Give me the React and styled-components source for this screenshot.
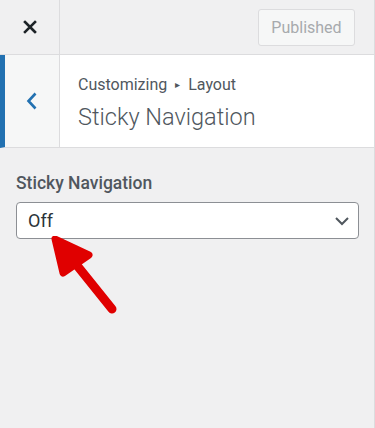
import React from "react";
import styled, { createGlobalStyle } from "styled-components";

const GlobalStyle = createGlobalStyle`
  html, body {
    margin: 0;
    padding: 0;
    background: #f0f0f1;
  }
  body {
    font-family: Roboto, "Open Sans", sans-serif;
    color: #50575e;
  }
`;

const App = () => {
  return (
    <Panel>
      <GlobalStyle />
      <Header>
        <CloseButton aria-label="Close">
          <svg width="14" height="14" viewBox="0 0 14 14">
            <path d="M2 2 L12 12 M12 2 L2 12" stroke="#1d2327" strokeWidth="2.6" strokeLinecap="square" />
          </svg>
        </CloseButton>
        <HeaderRight>
          <PublishButton disabled>Published</PublishButton>
        </HeaderRight>
      </Header>

      <SectionHead>
        <BackButton aria-label="Back">
          <svg width="12" height="18" viewBox="0 0 12 18">
            <path d="M9.5 1.5 L2.5 9 L9.5 16.5" fill="none" stroke="#2271b1" strokeWidth="2.6" />
          </svg>
        </BackButton>
        <TitleBlock>
          <Crumbs>
            Customizing <Caret>▸</Caret> Layout
          </Crumbs>
          <Title>Sticky Navigation</Title>
        </TitleBlock>
      </SectionHead>

      <Body>
        <Label>Sticky Navigation</Label>
        <SelectBox>
          <span>Off</span>
          <svg width="14" height="10" viewBox="0 0 14 10">
            <path d="M1 2 L7 8 L13 2" fill="none" stroke="#50575e" strokeWidth="2" />
          </svg>
        </SelectBox>
        <Arrow width="140" height="110" viewBox="0 0 140 110">
          <polygon points="39,3 73,19 47,37" fill="#e00000" stroke="#e00000" strokeWidth="7" strokeLinejoin="round" />
          <line x1="47" y1="12" x2="96" y2="73" stroke="#e00000" strokeWidth="9" strokeLinecap="round" />
        </Arrow>
      </Body>
    </Panel>
  );
};

export default App;

const Panel = styled.div`
  width: 374px;
  height: 428px;
  border-right: 1px solid #dcdcde;
  background: #f0f0f1;
  position: relative;
  overflow: hidden;
`;

const Header = styled.div`
  height: 54px;
  display: flex;
  border-bottom: 1px solid #dcdcde;
`;

const CloseButton = styled.div`
  width: 59px;
  display: flex;
  align-items: center;
  justify-content: center;
  border-right: 1px solid #dcdcde;
`;

const HeaderRight = styled.div`
  flex: 1;
  display: flex;
  justify-content: flex-end;
  align-items: flex-start;
  padding: 9px 19px 0 0;
`;

const PublishButton = styled.button`
  width: 97px;
  height: 37px;
  box-sizing: border-box;
  border: 1px solid #dcdcde;
  border-radius: 3px;
  background: #f6f7f7;
  color: #a7aaad;
  font-family: Roboto, "Open Sans", sans-serif;
  font-size: 16px;
  padding: 0;
`;

const SectionHead = styled.div`
  height: 92px;
  display: flex;
  background: #fff;
  border-left: 5px solid #2271b1;
  border-bottom: 1px solid #dcdcde;
`;

const BackButton = styled.div`
  width: 54px;
  background: #f6f7f7;
  border-right: 1px solid #dcdcde;
  display: flex;
  align-items: center;
  justify-content: center;
`;

const TitleBlock = styled.div`
  padding: 20px 0 0 18px;
`;

const Crumbs = styled.div`
  font-size: 16px;
  line-height: 20px;
  color: #50575e;
`;

const Caret = styled.span`
  font-size: 10px;
  vertical-align: 2px;
  margin: 0 4px;
`;

const Title = styled.div`
  font-size: 23.5px;
  font-weight: 300;
  line-height: 30px;
  margin-top: 7px;
  color: #50575e;
`;

const Body = styled.div`
  padding: 25px 15px 0 16px;
  position: relative;
`;

const Label = styled.div`
  font-size: 17.5px;
  font-weight: 500;
  line-height: 20px;
  color: #50575e;
  margin-bottom: 9px;
`;

const SelectBox = styled.div`
  height: 37px;
  box-sizing: border-box;
  border: 1px solid #8c8f94;
  border-radius: 4px;
  background: #fff;
  display: flex;
  align-items: center;
  justify-content: space-between;
  padding: 0 9px 0 11px;
  font-size: 18px;
  color: #2c3338;
`;

const Arrow = styled.svg`
  position: absolute;
  left: 16px;
  top: 88px;
`;
